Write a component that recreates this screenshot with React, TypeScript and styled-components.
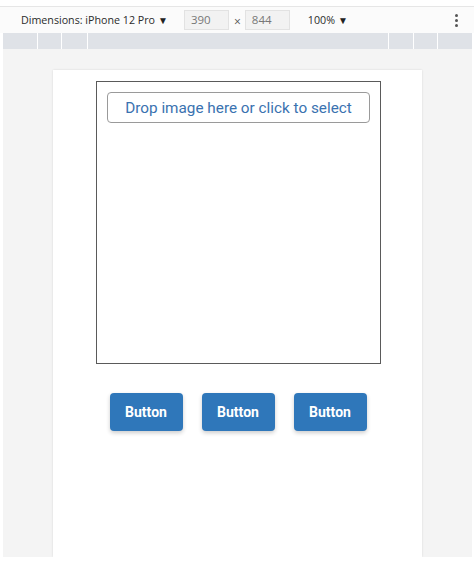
import styled, { createGlobalStyle } from 'styled-components'

const GlobalStyle = createGlobalStyle`
  html, body {
    margin: 0;
    padding: 0;
    background: #fff;
  }
`

const Page = styled.div`
  height: 561px;
  display: flex;
  flex-direction: column;
  overflow: hidden;
  padding-top: 6px;
  box-sizing: border-box;
`

const Toolbar = styled.div`
  height: 26px;
  flex-shrink: 0;
  display: flex;
  align-items: center;
  border-top: 1px solid #e6e6e6;
  background: #fbfbfb;
  padding: 0 0 0 21px;
  font-family: "Open Sans", "Noto Sans", sans-serif;
  font-size: 10.7px;
  color: #2b2b2b;
`

const Label = styled.span<{ $before?: number; $after?: number }>`
  display: flex;
  align-items: center;
  gap: 3px;
  margin-left: ${(p) => p.$before ?? 0}px;
  margin-right: ${(p) => p.$after ?? 0}px;
`

const Caret = styled.span`
  font-size: 10px;
  color: #222;
`

const SizeInput = styled.div`
  width: 45px;
  height: 20px;
  box-sizing: border-box;
  border: 1px solid #e2e2e2;
  background: #f2f2f2;
  color: #777;
  padding-left: 6px;
  line-height: 18px;
  font-size: 11.5px;
`

const Times = styled.span`
  margin: 3px 4px 0 5px;
  color: #555;
  font-size: 12px;
`

const Kebab = styled.div`
  margin-left: auto;
  width: 36px;
  display: flex;
  flex-direction: column;
  align-items: center;
  gap: 2px;

  span {
    width: 3px;
    height: 3px;
    border-radius: 50%;
    background: #555;
  }
`

const Ruler = styled.div`
  height: 16px;
  flex-shrink: 0;
  display: flex;
  gap: 1px;
  padding: 0 2px 0 3px;
  background: #fff;
`

const RulerCell = styled.div<{ $w?: number }>`
  background: #dfe2e7;
  ${(p) => (p.$w ? `width: ${p.$w}px;` : 'flex: 1;')}
`

const Viewport = styled.div`
  flex: 1;
  background: #f4f4f4;
  padding-top: 21px;
  margin: 0 2px 4px 3px;
  display: flex;
  justify-content: center;
  overflow: hidden;
`

const Device = styled.div`
  width: 369px;
  background: #fff;
  box-shadow: 0 0 2px rgba(0, 0, 0, 0.12);
  padding-top: 11px;
  display: flex;
  flex-direction: column;
  align-items: center;
`

const DropZone = styled.div`
  width: 285px;
  height: 283px;
  box-sizing: border-box;
  border: 1px solid #5a5a5a;
  padding: 10px;
  margin-left: 2px;
`

const SelectButton = styled.div`
  height: 31px;
  box-sizing: border-box;
  border: 1px solid #9a9a9a;
  border-radius: 4px;
  display: flex;
  align-items: center;
  justify-content: center;
  font-family: Roboto, "Noto Sans", sans-serif;
  font-size: 15.3px;
  color: #3a72b0;
`

const ButtonRow = styled.div`
  display: flex;
  gap: 19px;
  margin-top: 29px;
  margin-left: 1px;
`

const ActionButton = styled.button`
  width: 73px;
  height: 38px;
  border: none;
  border-radius: 4px;
  background: #2f77ba;
  color: #fff;
  font-family: Roboto, "Noto Sans", sans-serif;
  font-weight: 700;
  font-size: 14px;
  box-shadow: 0 2px 4px rgba(0, 0, 0, 0.2);
  padding: 0;
`

export default function App() {
  return (
    <Page>
      <GlobalStyle />
      <Toolbar>
        <Label $after={16}>
          Dimensions: iPhone 12 Pro <Caret>▼</Caret>
        </Label>
        <SizeInput>390</SizeInput>
        <Times>×</Times>
        <SizeInput>844</SizeInput>
        <Label $before={18}>
          100% <Caret>▼</Caret>
        </Label>
        <Kebab>
          <span />
          <span />
          <span />
        </Kebab>
      </Toolbar>
      <Ruler>
        <RulerCell $w={34} />
        <RulerCell $w={23} />
        <RulerCell $w={25} />
        <RulerCell />
        <RulerCell $w={24} />
        <RulerCell $w={23} />
        <RulerCell $w={34} />
      </Ruler>
      <Viewport>
        <Device>
          <DropZone>
            <SelectButton>Drop image here or click to select</SelectButton>
          </DropZone>
          <ButtonRow>
            <ActionButton>Button</ActionButton>
            <ActionButton>Button</ActionButton>
            <ActionButton>Button</ActionButton>
          </ButtonRow>
        </Device>
      </Viewport>
    </Page>
  )
}
